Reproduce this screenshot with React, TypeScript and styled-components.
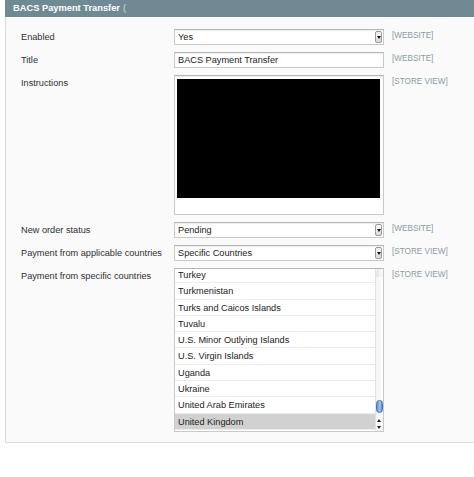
import styled, { createGlobalStyle } from "styled-components";

const GlobalStyle = createGlobalStyle`
  html, body {
    margin: 0;
    padding: 0;
    background: #ffffff;
  }
  body {
    font-family: "Liberation Sans", Arial, sans-serif;
    color: #2f2f2f;
  }
`;

const Wrapper = styled.main`
  padding-left: 5px;
  width: 469px;
`;

const Header = styled.div`
  height: 17px;
  line-height: 17px;
  background: #6f8a93;
  color: #ffffff;
  font-size: 9.3px;
  font-weight: 700;
  padding-left: 8px;
  white-space: nowrap;
  overflow: hidden;

  span {
    font-weight: 400;
    opacity: 0.7;
    margin-left: 3px;
  }
`;

const Panel = styled.section`
  background: #fafafa;
  border-left: 1px solid #dcdcdc;
  border-bottom: 1px solid #dcdcdc;
  padding: 12px 0 10px 15px;
`;

const Form = styled.div`
  display: grid;
  grid-template-columns: 153px 218px auto;
  row-gap: 7px;
  align-items: start;
`;

const Label = styled.div`
  font-size: 9.2px;
  line-height: 12px;
  padding-top: 2px;
  color: #2f2f2f;
  white-space: nowrap;
`;

const Scope = styled.div`
  font-size: 8.2px;
  line-height: 12px;
  padding-top: 1px;
  color: #8b9ba2;
  white-space: nowrap;
`;

const Field = styled.div<{ $h: number }>`
  width: 210px;
  height: ${(p) => p.$h}px;
  box-sizing: border-box;
  background: #ffffff;
  border: 1px solid #c9c9c9;
  border-top-color: #b5b5b5;
  box-shadow: inset 0 1px 1px rgba(0, 0, 0, 0.08);
  font-size: 9.2px;
  line-height: 14px;
  color: #222;
  position: relative;
`;

const SelectBox = styled(Field)`
  padding-left: 3px;
`;

const InputBox = styled(Field)`
  padding-left: 3px;
`;

const Arrow = styled.span`
  position: absolute;
  right: 1px;
  top: 1px;
  width: 7px;
  height: 12px;
  border-radius: 2px;
  background: linear-gradient(#fdfdfd, #d9d9d9);
  border: 1px solid #9a9a9a;
  box-sizing: border-box;

  &::after {
    content: "";
    position: absolute;
    left: 1px;
    top: 4px;
    border-left: 2px solid transparent;
    border-right: 2px solid transparent;
    border-top: 3px solid #111;
  }
`;

const EditorBox = styled(Field)`
  padding: 3px 3px 16px 2px;
`;

const Editor = styled.div`
  height: 100%;
  background: #000;
`;

const ListBox = styled(Field)`
  display: flex;
  overflow: hidden;
`;

const Options = styled.div`
  flex: 1;
  margin-top: -2px;
`;

const Option = styled.div<{ $selected?: boolean }>`
  height: 16.3px;
  line-height: 16px;
  box-sizing: border-box;
  padding-left: 3px;
  border-bottom: 1px solid #ececec;
  background: ${(p) => (p.$selected ? "#d1d1d1" : "#ffffff")};
  white-space: nowrap;
`;

const Scrollbar = styled.div`
  width: 7px;
  border-left: 1px solid #e2e2e2;
  background: linear-gradient(90deg, #f4f4f4, #ffffff);
  display: flex;
  flex-direction: column;
`;

const TrackCap = styled.div`
  height: 8px;
  border-radius: 4px 4px 0 0;
  background: linear-gradient(90deg, #e6e6e6, #fafafa);
`;

const Track = styled.div`
  flex: 1;
  position: relative;
`;

const Thumb = styled.div`
  position: absolute;
  left: 0;
  right: 0;
  bottom: 4px;
  height: 13px;
  border-radius: 4px;
  background: linear-gradient(90deg, #5d8fd6, #a6c6f2 60%, #4f7fc9);
  border: 1px solid #4472b8;
  box-sizing: border-box;
`;

const StepButton = styled.div<{ $down?: boolean }>`
  height: 7px;
  position: relative;
  background: #f6f6f6;

  &::after {
    content: "";
    position: absolute;
    left: 1px;
    top: 2px;
    border-left: 2px solid transparent;
    border-right: 2px solid transparent;
    ${(p) =>
      p.$down ? "border-top: 3px solid #222;" : "border-bottom: 3px solid #222;"}
  }
`;

const countries = [
  "Turkey",
  "Turkmenistan",
  "Turks and Caicos Islands",
  "Tuvalu",
  "U.S. Minor Outlying Islands",
  "U.S. Virgin Islands",
  "Uganda",
  "Ukraine",
  "United Arab Emirates",
  "United Kingdom",
];

export default function App() {
  return (
    <Wrapper>
      <GlobalStyle />
      <Header>
        BACS Payment Transfer<span>(</span>
      </Header>
      <Panel>
        <Form>
          <Label>Enabled</Label>
          <SelectBox $h={16}>
            Yes
            <Arrow />
          </SelectBox>
          <Scope>[WEBSITE]</Scope>

          <Label>Title</Label>
          <InputBox $h={16}>BACS Payment Transfer</InputBox>
          <Scope>[WEBSITE]</Scope>

          <Label>Instructions</Label>
          <EditorBox $h={140}>
            <Editor />
          </EditorBox>
          <Scope>[STORE VIEW]</Scope>

          <Label>New order status</Label>
          <SelectBox $h={16}>
            Pending
            <Arrow />
          </SelectBox>
          <Scope>[WEBSITE]</Scope>

          <Label>Payment from applicable countries</Label>
          <SelectBox $h={16}>
            Specific Countries
            <Arrow />
          </SelectBox>
          <Scope>[STORE VIEW]</Scope>

          <Label>Payment from specific countries</Label>
          <ListBox $h={164}>
            <Options>
              {countries.map((c) => (
                <Option key={c} $selected={c === "United Kingdom"}>
                  {c}
                </Option>
              ))}
            </Options>
            <Scrollbar>
              <TrackCap />
              <Track>
                <Thumb />
              </Track>
              <StepButton />
              <StepButton $down />
            </Scrollbar>
          </ListBox>
          <Scope>[STORE VIEW]</Scope>
        </Form>
      </Panel>
    </Wrapper>
  );
}
